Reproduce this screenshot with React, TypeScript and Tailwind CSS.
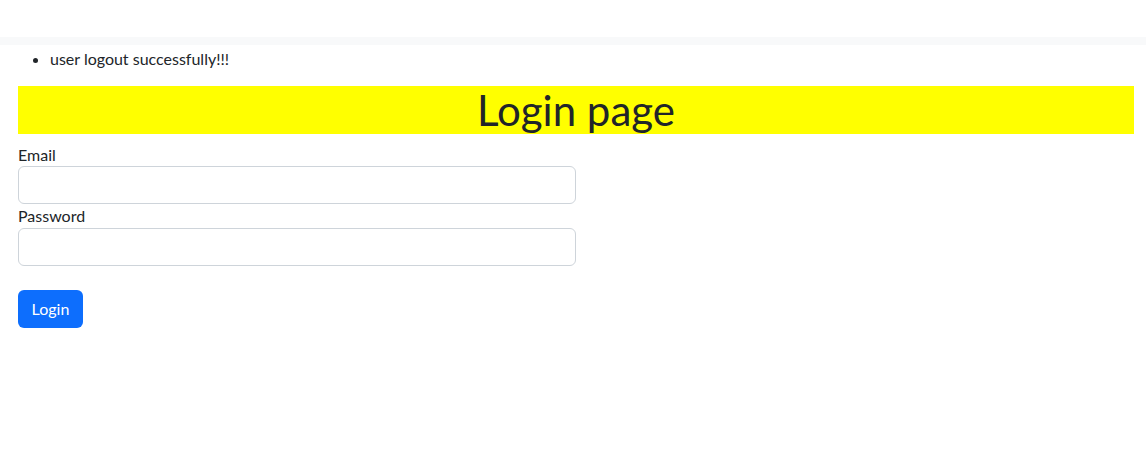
export default function App() {
  const font = { fontFamily: '"Segoe UI", Lato, "Noto Sans", sans-serif' };
  return (
    <div className="min-h-[462px] bg-white text-[#212529]" style={font}>
      <div className="h-[37px]" />
      <div className="h-[8px] bg-[#f8f9fa]" />
      <div className="pl-[18px] pr-[12px]">
        <ul className="list-disc pl-[32px] mt-[2px] mb-[15px] text-[16px] leading-[24px]">
          <li>user logout successfully!!!</li>
        </ul>
        <h1 className="bg-[#ffff00] text-center text-[42px] leading-[48px] font-normal">Login page</h1>
        <form className="w-[558px] mt-[10px]">
          <label className="block text-[16px] leading-[22px]">Email</label>
          <input type="email" className="block w-full h-[38px] border border-[#ced4da] rounded-[6px] px-3" />
          <label className="block text-[16px] leading-[24px]">Password</label>
          <input type="password" className="block w-full h-[38px] border border-[#ced4da] rounded-[6px] px-3" />
          <button type="button" className="mt-[24px] h-[38px] w-[65px] bg-[#0d6efd] text-white rounded-[6px] text-[16px]">Login</button>
        </form>
      </div>
    </div>
  );
}
